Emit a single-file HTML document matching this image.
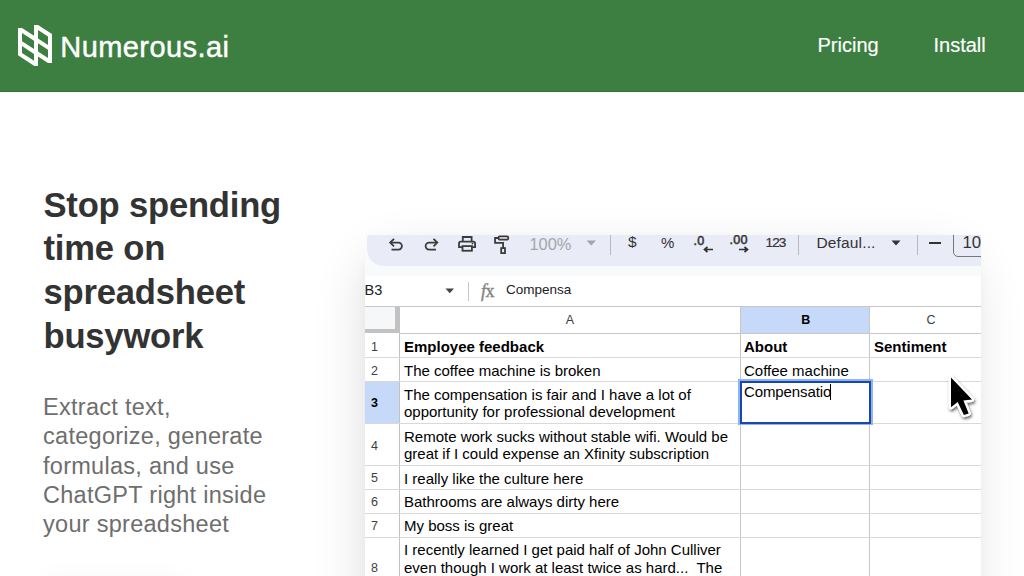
<!DOCTYPE html>
<html><head><meta charset="utf-8">
<style>
*{margin:0;padding:0;box-sizing:border-box}
html,body{width:1024px;height:576px;overflow:hidden;background:#fff}
body{position:relative;font-family:"Liberation Sans",sans-serif}
.a{position:absolute;white-space:pre}
.r{position:absolute}
.full{position:absolute;left:0;top:0;width:1024px;height:576px}
#hdr{position:absolute;left:0;top:0;width:1024px;height:92px;background:#3d7e41;border-bottom:1px solid #327436}
.nav{color:#fff;font-size:20px;line-height:24px;-webkit-text-stroke:0.15px #fff}
#h1{left:43.5px;top:183.9px;font-size:34.6px;line-height:43.55px;font-weight:700;color:#333;letter-spacing:-0.2px}
#p{left:43px;top:392.6px;font-size:23.5px;line-height:29.45px;color:#6e6e6e;letter-spacing:0.28px}
#shd{position:absolute;left:365px;top:235px;width:616px;height:400px;border-radius:40px;box-shadow:-5px 16px 50px 0 rgba(0,0,0,.11),-1px 4px 12px rgba(0,0,0,.03)}
#sheet{position:absolute;left:365px;top:235px;width:616px;height:341px;background:#fff}
#tb{position:absolute;left:367px;top:235px;width:614px;height:31px;background:#e9ebf6;border-radius:3px 0 0 17px}
#band{position:absolute;left:365px;top:235px;width:616px;height:41px;background:#f9fafb}
.tbt{color:#333;font-size:15px;line-height:20px}
.sep{position:absolute;width:1px;background:#b8b9c0}
.gl{position:absolute;background:#d9d9d9}
.caret{display:inline-block;width:1px;height:16px;background:#000;vertical-align:-3px;margin-left:-1.5px}
.rn{width:34px;text-align:center}
</style></head><body>
<div id="hdr"></div>
<svg class="r" style="left:0;top:0" width="60" height="72" viewBox="0 0 60 72">
<path fill="#fff" fill-rule="evenodd" d="M18 28 L22 28 L34 35.8 L34 25 L38 25 L52 34.1 L52 63 L48 63 L38 56.5 L38 65.9 L34 65.9 L34 65.7 L18 55.3 Z M22 32.9 L34 40.7 L34 49 L22 41.2 Z M22 46.1 L34 53.9 L34 60.8 L22 53 Z M38 29.9 L48 36.4 L48 44.9 L38 38.4 Z M38 43.3 L48 49.8 L48 58.1 L38 51.6 Z"/>
</svg>
<div class="a" style="left:60.3px;top:28.8px;font-size:29px;line-height:36px;color:#fff;letter-spacing:0.43px;-webkit-text-stroke:0.45px #fff">Numerous.ai</div>
<div class="a nav" style="left:817.5px;top:32.6px">Pricing</div>
<div class="a nav" style="left:933.5px;top:32.6px">Install</div>

<div id="h1" class="a">Stop spending
time on
spreadsheet
busywork</div>
<div id="p" class="a">Extract text,
categorize, generate
formulas, and use
ChatGPT right inside
your spreadsheet</div>

<div class="r" style="left:40px;top:588px;width:150px;height:50px;border-radius:25px;box-shadow:0 -2px 30px 4px rgba(0,0,0,.05)"></div>
<div id="shd"></div><div id="sheet"></div>
<div id="band"></div>
<div class="full" style="clip-path:polygon(365px 235px,981px 235px,981px 266px,365px 266px)">
<div id="tb"></div>
<svg class="r" style="left:385px;top:234px" width="130" height="24" viewBox="385 234 130 24">
 <g fill="none" stroke="#3c3c3c" stroke-width="1.8">
  <path d="M394 238.8 L390.2 242.6 L394 246.4"/>
  <path d="M390.5 242.6 H398.4 A3.5 3.5 0 0 1 398.4 249.6 H391.5"/>
  <path d="M433.5 238.8 L437.3 242.6 L433.5 246.4"/>
  <path d="M437 242.6 H429.1 A3.5 3.5 0 0 0 429.1 249.6 H436"/>
  <path d="M462.8 241.7 V237 H471.6 V241.7"/>
  <path d="M462.5 247.2 H459 V243.5 A1.8 1.8 0 0 1 460.8 241.7 H473.3 A1.8 1.8 0 0 1 475.1 243.5 V247.2 H471.9"/>
  <rect x="462.5" y="246.1" width="9.4" height="4.65"/>
  <rect x="498.6" y="236.4" width="9.6" height="3.2" rx="1"/>
  <path d="M498.6 238 H495.05 V242.8 H503.1 V248.1"/>
  <rect x="501.2" y="248.1" width="3.8" height="5"/>
 </g>
 <circle cx="472.5" cy="243.6" r="0.9" fill="#3c3c3c"/>
 <g>
 </g>
</svg>
<div class="a" style="left:529.5px;top:234px;font-size:16.4px;line-height:20px;color:#a4a5ab">100%</div>
<svg class="r" style="left:586px;top:240px" width="11" height="6"><path d="M0.5 0.5 H10 L5.25 5.5 Z" fill="#a4a5ab"/></svg>
<div class="sep" style="left:610px;top:235px;height:19.5px"></div>
<div class="a tbt" style="left:628px;top:232.3px;font-size:15.5px">$</div>
<div class="a tbt" style="left:661px;top:232.8px">%</div>
<div class="a tbt" style="left:693.5px;top:231.8px;font-size:12.6px;line-height:18px;letter-spacing:0.3px;-webkit-text-stroke:0.5px #333">.0</div>
<svg class="r" style="left:703px;top:246px" width="11" height="8"><path d="M10 3.5 H2 M4.5 1 L1.5 3.5 L4.5 6" fill="none" stroke="#333" stroke-width="1.7"/></svg>
<div class="a tbt" style="left:729.5px;top:231.3px;font-size:12.6px;line-height:18px;letter-spacing:0.3px;-webkit-text-stroke:0.5px #333">.00</div>
<svg class="r" style="left:738px;top:246px" width="11" height="8"><path d="M1 3.5 H9 M6.5 1 L9.5 3.5 L6.5 6" fill="none" stroke="#333" stroke-width="1.7"/></svg>
<div class="a tbt" style="left:765.5px;top:232.8px;font-size:13.6px;line-height:20px;letter-spacing:-0.9px;-webkit-text-stroke:0.2px #333">123</div>
<div class="sep" style="left:798px;top:235px;height:19.5px"></div>
<div class="a tbt" style="left:816.5px;top:233px;font-size:15.5px;letter-spacing:0.15px">Defaul...</div>
<svg class="r" style="left:891px;top:240px" width="10" height="6"><path d="M0.5 0.5 H9.5 L5 5.5 Z" fill="#333"/></svg>
<div class="sep" style="left:916.5px;top:235px;height:19.5px"></div>
<div class="r" style="left:929px;top:242px;width:12px;height:2px;background:#333"></div>
<div class="r" style="left:952.5px;top:225px;width:60px;height:31.5px;border:1px solid #777;border-radius:5px"></div>
<div class="a tbt" style="left:962.5px;top:232.6px;font-size:16.8px">10</div>
</div>

<!-- formula bar -->
<div class="a" style="left:364.5px;top:280.5px;font-size:14.5px;line-height:18px;color:#202124">B3</div>
<svg class="r" style="left:445px;top:288px" width="10" height="6"><path d="M0.5 0.5 H9 L4.75 5.2 Z" fill="#444"/></svg>
<div class="sep" style="left:468px;top:282px;height:18.5px;background:#c4c7c5"></div>
<div class="a" style="left:481px;top:280.5px;font-size:18px;line-height:20px;color:#858585;font-family:'Liberation Serif',serif;-webkit-text-stroke:0.4px #858585"><i>f</i><span style="margin-left:-0.5px">x</span></div>
<div class="a" style="left:506px;top:281px;font-size:13.5px;line-height:18px;color:#202124">Compensa</div>
<div class="gl" style="left:365px;top:306px;width:616px;height:1px;background:#c7c7c7"></div>

<!-- column header -->
<div class="r" style="left:365px;top:307px;width:30px;height:22px;background:#f6f7f8"></div>
<div class="r" style="left:395px;top:307px;width:5px;height:26px;background:#c2c2c2"></div>
<div class="r" style="left:365px;top:329px;width:35px;height:4px;background:#c2c2c2"></div>
<div class="r" style="left:741px;top:307px;width:128px;height:26px;background:#c6d9f9"></div>
<div class="a" style="left:400px;top:311px;width:340px;text-align:center;font-size:12.5px;line-height:18px;color:#3c4043">A</div>
<div class="a" style="left:740.7px;top:311px;width:130px;text-align:center;font-size:12.5px;line-height:18px;color:#000;font-weight:700">B</div>
<div class="a" style="left:871px;top:311px;width:120px;text-align:center;font-size:12.5px;line-height:18px;color:#3c4043">C</div>
<div class="gl" style="left:400px;top:333px;width:581px;height:1px;background:#c7c7c7"></div>

<div class="r" style="left:365px;top:382px;width:34px;height:41px;background:#c6d9f9"></div>

<div class="gl" style="left:399px;top:307px;width:1px;height:269px;background:#c2c2c2"></div>
<div class="gl" style="left:740px;top:307px;width:1px;height:269px;background:#c7c7c7"></div>
<div class="gl" style="left:869px;top:307px;width:1px;height:269px;background:#c7c7c7"></div>
<div class="gl" style="left:365px;top:357px;width:616px;height:1px"></div>
<div class="gl" style="left:365px;top:381px;width:616px;height:1px"></div>
<div class="gl" style="left:365px;top:423px;width:616px;height:1px"></div>
<div class="gl" style="left:365px;top:465px;width:616px;height:1px"></div>
<div class="gl" style="left:365px;top:489px;width:616px;height:1px"></div>
<div class="gl" style="left:365px;top:513px;width:616px;height:1px"></div>
<div class="gl" style="left:365px;top:537px;width:616px;height:1px"></div>
<div class="a rn" style="left:357.5px;top:338.87px;font-size:12.5px;line-height:16px;font-weight:400;color:#3c4043;">1</div>
<div class="a rn" style="left:357.5px;top:362.87px;font-size:12.5px;line-height:16px;font-weight:400;color:#3c4043;">2</div>
<div class="a rn" style="left:357.5px;top:395.47px;font-size:12.5px;line-height:16px;font-weight:700;color:#000;">3</div>
<div class="a rn" style="left:357.5px;top:437.97px;font-size:12.5px;line-height:16px;font-weight:400;color:#3c4043;">4</div>
<div class="a rn" style="left:357.5px;top:469.67px;font-size:12.5px;line-height:16px;font-weight:400;color:#3c4043;">5</div>
<div class="a rn" style="left:357.5px;top:493.67px;font-size:12.5px;line-height:16px;font-weight:400;color:#3c4043;">6</div>
<div class="a rn" style="left:357.5px;top:517.67px;font-size:12.5px;line-height:16px;font-weight:400;color:#3c4043;">7</div>
<div class="a rn" style="left:357.5px;top:559.67px;font-size:12.5px;line-height:16px;font-weight:400;color:#3c4043;">8</div>
<div class="a" style="left:404.0px;top:337.60px;font-size:15px;line-height:18px;font-weight:700;color:#000;">Employee feedback</div>
<div class="a" style="left:404.0px;top:361.70px;font-size:15px;line-height:18px;font-weight:400;color:#000;">The coffee machine is broken</div>
<div class="a" style="left:404.0px;top:385.80px;font-size:15px;line-height:18px;font-weight:400;color:#000;">The compensation is fair and I have a lot of</div>
<div class="a" style="left:404.0px;top:403.30px;font-size:15px;line-height:18px;font-weight:400;color:#000;">opportunity for professional development</div>
<div class="a" style="left:404.0px;top:427.50px;font-size:15px;line-height:18px;font-weight:400;color:#000;">Remote work sucks without stable wifi. Would be</div>
<div class="a" style="left:404.0px;top:444.80px;font-size:15px;line-height:18px;font-weight:400;color:#000;">great if I could expense an Xfinity subscription</div>
<div class="a" style="left:404.0px;top:470.10px;font-size:15px;line-height:18px;font-weight:400;color:#000;">I really like the culture here</div>
<div class="a" style="left:404.0px;top:493.40px;font-size:15px;line-height:18px;font-weight:400;color:#000;">Bathrooms are always dirty here</div>
<div class="a" style="left:404.0px;top:517.30px;font-size:15px;line-height:18px;font-weight:400;color:#000;">My boss is great</div>
<div class="a" style="left:404.0px;top:541.40px;font-size:15px;line-height:18px;font-weight:400;color:#000;">I recently learned I get paid half of John Culliver</div>
<div class="a" style="left:404.0px;top:558.80px;font-size:15px;line-height:18px;font-weight:400;color:#000;">even though I work at least twice as hard...  The</div>
<div class="a" style="left:744px;top:337.60px;font-size:15px;line-height:18px;font-weight:700;color:#000;">About</div>
<div class="a" style="left:874px;top:337.60px;font-size:15px;line-height:18px;font-weight:700;color:#000;">Sentiment</div>
<div class="a" style="left:744px;top:361.70px;font-size:15px;line-height:18px;font-weight:400;color:#000;">Coffee machine</div>
<div class="a" style="left:744px;top:383.30px;font-size:15px;line-height:18px;font-weight:400;color:#000;letter-spacing:-0.1px">Compensatio<span class="caret"></span></div>

<div class="r" style="left:738.2px;top:379.2px;width:134.4px;height:46px;border:2px solid #8fb4f4"></div>
<div class="r" style="left:740px;top:381.4px;width:130.5px;height:42.6px;border:2.6px solid #1a46b0"></div>

<svg class="r" style="left:940px;top:367.6px;overflow:visible" width="45" height="60" viewBox="940 368 45 60">
 <defs><filter id="sh" x="-50%" y="-50%" width="200%" height="200%"><feDropShadow dx="1" dy="2" stdDeviation="1.6" flood-color="#000" flood-opacity="0.6"/></filter></defs>
 <path filter="url(#sh)" d="M951 377.6 L951 407.2 L957.7 402 L963.9 414.9 L968.65 413.5 L963.4 400.6 L972 399.6 Z" fill="#fff" stroke="#fff" stroke-width="4.6" stroke-linejoin="round"/>
 <path d="M951 377.6 L951 407.2 L957.7 402 L963.9 414.9 L968.65 413.5 L963.4 400.6 L972 399.6 Z" fill="#000"/>
</svg>
</body></html>
